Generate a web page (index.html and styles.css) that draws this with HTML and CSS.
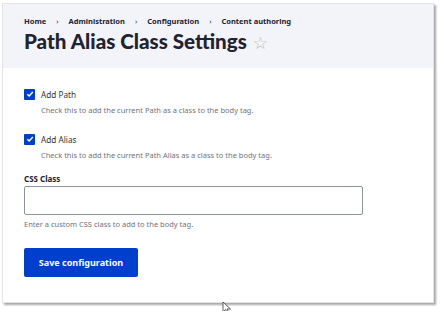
FILE: index.html
```html
<!DOCTYPE html>
<html>
<head>
<meta charset="utf-8">
<link rel="stylesheet" href="styles.css">
</head>
<body>
<div class="frame">
  <header class="head">
    <nav class="crumbs">
      <span>Home</span><span class="sep">›</span>
      <span>Administration</span><span class="sep">›</span>
      <span>Configuration</span><span class="sep">›</span>
      <span>Content authoring</span>
    </nav>
    <h1 class="title">Path Alias Class Settings <span class="star">☆</span></h1>
  </header>
  <main class="content">
    <div class="check">
      <div class="check-row"><span class="box"><svg viewBox="0 0 10 10" width="10" height="10"><path d="M2.3 5.2 L4.2 7 L7.8 3" fill="none" stroke="#fff" stroke-width="1.5"/></svg></span><span class="check-label">Add Path</span></div>
      <div class="desc indent">Check this to add the current Path as a class to the body tag.</div>
    </div>
    <div class="check">
      <div class="check-row"><span class="box"><svg viewBox="0 0 10 10" width="10" height="10"><path d="M2.3 5.2 L4.2 7 L7.8 3" fill="none" stroke="#fff" stroke-width="1.5"/></svg></span><span class="check-label">Add Alias</span></div>
      <div class="desc indent">Check this to add the current Path Alias as a class to the body tag.</div>
    </div>
    <div class="field">
      <div class="field-label">CSS Class</div>
      <div class="input"></div>
      <div class="desc">Enter a custom CSS class to add to the body tag.</div>
    </div>
    <div class="actions"><span class="btn">Save configuration</span></div>
  </main>
  <svg class="cursor" viewBox="0 0 10 14" width="10" height="14"><path d="M1 1 L1 11 L3.5 8.5 L5.5 12.5 L7 11.8 L5 8 L8.5 8 Z" fill="#fff" stroke="#333" stroke-width="0.8"/></svg>
</div>
</body>
</html>
```
FILE: styles.css
```css
html, body { margin: 0; padding: 0; background: #fff; }
body { width: 440px; height: 311px; overflow: hidden; font-family: "Noto Sans", "Open Sans", sans-serif; color: #222330; }
.frame {
  position: relative;
  margin: 3px 0 0 2px;
  width: 432px;
  height: 300px;
  border: 1px solid #e4e4e8;
  box-shadow: 2px 2px 2px rgba(0,0,0,0.35);
  background: #fff;
  box-sizing: border-box;
}
.head { background: #f3f4f9; height: 64px; padding: 12px 0 0 21px; box-sizing: border-box; }
.crumbs { font-size: 7.5px; font-weight: 700; display: flex; line-height: 11px; color: #222330; }
.crumbs .sep { margin: 0 10px; font-weight: 400; }
.title { margin: 1px 0 0; font-family: Lato, "Noto Sans", sans-serif; font-size: 20.6px; line-height: 27px; font-weight: 900; color: #222330; }
.star { font-family: "DejaVu Sans", sans-serif; font-size: 17px; font-weight: 400; color: #b9b9c0; margin-left: 1px; }
.content { padding: 20px 0 0 21px; display: flex; flex-direction: column; align-items: flex-start; }
.check + .check { margin-top: 18px; }
.check-row { display: flex; align-items: center; gap: 6px; height: 12px; }
.box { width: 11px; height: 11px; background: #003ecc; border-radius: 1px; display: flex; align-items: center; justify-content: center; }
.check-label { font-size: 8.2px; color: #333; }
.desc { font-size: 7.5px; color: #72727c; margin-top: 5px; line-height: 10px; }
.indent { margin-left: 17px; }
.field { margin-top: 14px; }
.field-label { font-size: 8px; font-weight: 700; line-height: 10px; }
.input { width: 339px; height: 29px; border: 1px solid #8e929c; border-radius: 2px; box-sizing: border-box; margin-top: 2px; }
.field .desc { margin-top: 4px; }
.actions { margin-top: 19px; }
.btn { display: inline-flex; align-items: center; justify-content: center; width: 114px; height: 29px; background: #003ecc; color: #fff; font-size: 9px; font-weight: 700; border-radius: 2px; }
.cursor { position: absolute; left: 219px; top: 297px; }
```
